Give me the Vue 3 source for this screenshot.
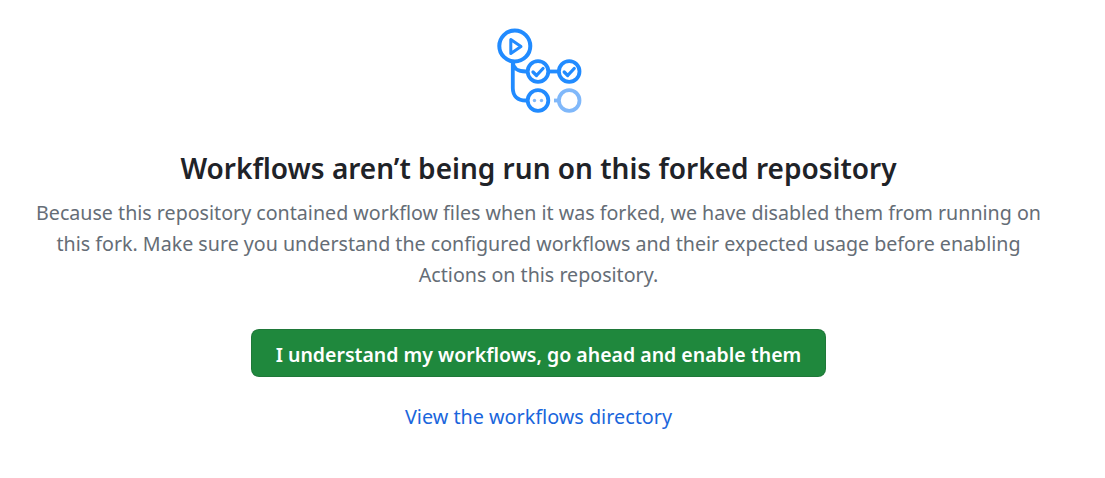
<script setup>
</script>

<template>
  <div class="page">
    <svg class="logo" width="90" height="90" viewBox="0 0 90 90" fill="none">
      <circle cx="20.8" cy="20" r="15.5" stroke="#218bff" stroke-width="4" />
      <path d="M16.8 13.5v14l10.2-7z" stroke="#218bff" stroke-width="3" stroke-linejoin="round" />
      <path d="M18.8 35v27c0 8 5 12.5 13 12.5h2M18.8 36c0 6 5 9.5 13 9.5h2" stroke="#218bff" stroke-width="3.8" />
      <circle cx="44" cy="45.5" r="10.3" stroke="#218bff" stroke-width="3.8" />
      <path d="M39 46l3.5 3.5 6.5-7" stroke="#218bff" stroke-width="3.3" stroke-linecap="round" stroke-linejoin="round" />
      <path d="M54 45.5h11" stroke="#218bff" stroke-width="3.8" />
      <circle cx="75.2" cy="45.5" r="10.3" stroke="#218bff" stroke-width="3.8" />
      <path d="M70.2 46l3.5 3.5 6.5-7" stroke="#218bff" stroke-width="3.3" stroke-linecap="round" stroke-linejoin="round" />
      <circle cx="44" cy="74.5" r="10.3" stroke="#218bff" stroke-width="3.8" />
      <circle cx="40.5" cy="74.5" r="1.7" fill="#80b8fa" />
      <circle cx="47.5" cy="74.5" r="1.7" fill="#80b8fa" />
      <path d="M60 74.5h4" stroke="#80b8fa" stroke-width="3.8" />
      <circle cx="75.2" cy="74.5" r="10.3" stroke="#80b8fa" stroke-width="3.8" />
    </svg>
    <h2 class="title">Workflows aren’t being run on this forked repository</h2>
    <p class="desc">Because this repository contained workflow files when it was forked, we have disabled them from running on this fork. Make sure you understand the configured workflows and their expected usage before enabling Actions on this repository.</p>
    <button class="enable">I understand my workflows, go ahead and enable them</button>
    <a class="link" href="#">View the workflows directory</a>
  </div>
</template>

<style scoped>
.page {
  display: flex;
  flex-direction: column;
  align-items: center;
  width: 1077px;
  height: 478px;
  box-sizing: border-box;
  padding-top: 26px;
  font-family: "Noto Sans", "Liberation Sans", sans-serif;
}
.logo {
  display: block;
}
.title {
  margin: 34px 0 0;
  font-size: 28px;
  line-height: 36px;
  font-weight: 600;
  color: #1f2328;
}
.desc {
  width: 1020px;
  margin: 11px 0 0;
  font-size: 19.65px;
  line-height: 31px;
  text-align: center;
  color: #656d76;
}
.enable {
  margin-top: 39px;
  width: 575px;
  height: 48px;
  padding-top: 3px;
  border: 1px solid rgba(31, 35, 40, 0.15);
  border-radius: 8px;
  background: #1f883d;
  color: #fff;
  font-family: inherit;
  font-size: 19.5px;
  font-weight: 600;
}
.link {
  margin-top: 25px;
  font-size: 19.8px;
  line-height: 30px;
  color: #1a66dc;
  text-decoration: none;
}
</style>
